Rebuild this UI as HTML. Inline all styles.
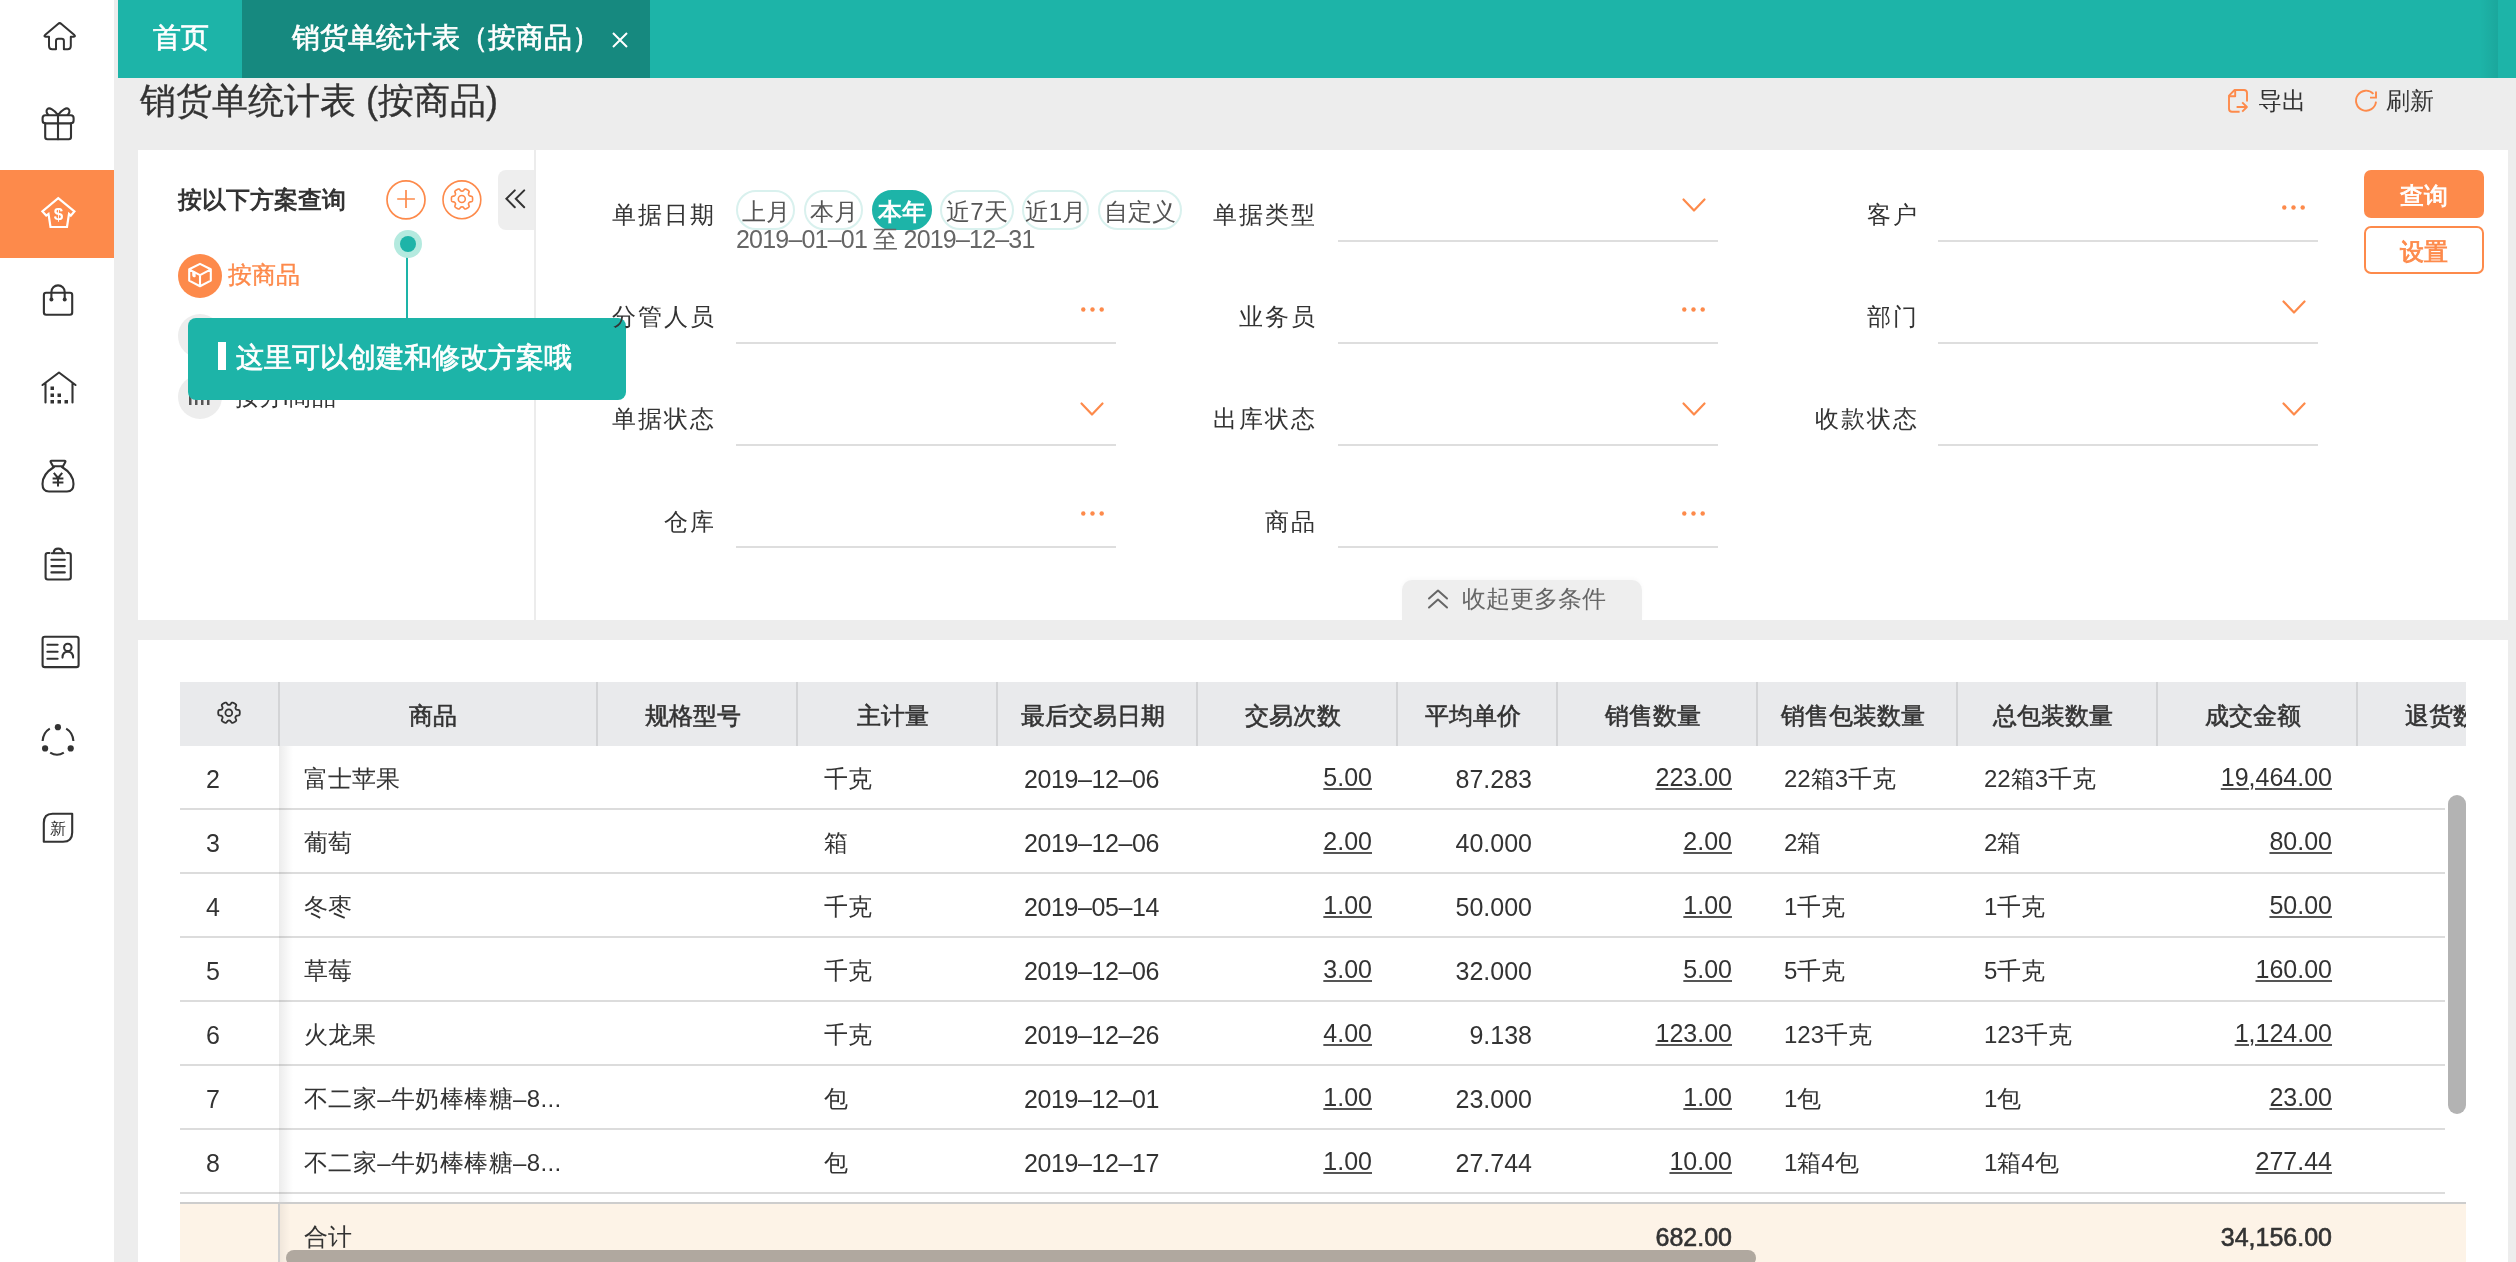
<!DOCTYPE html>
<html><head><meta charset="utf-8">
<style>
*{box-sizing:border-box;margin:0;padding:0}
html,body{width:2516px;height:1262px;overflow:hidden}
body{position:relative;will-change:transform;background:#ededed;font-family:"Liberation Sans",sans-serif;color:#333}
.a{position:absolute}
.t{position:absolute;white-space:nowrap;line-height:1}
svg{position:absolute;overflow:visible}
#side{left:0;top:0;width:114px;height:1262px;background:#fff}
#topbar{left:118px;top:0;width:2398px;height:78px;background:#1db4a8}
.card{background:#fff}
.lbl{font-size:24px;letter-spacing:2px;text-align:right;color:#333}
.uline{height:2px;background:#dedede}
.pill{position:absolute;top:190px;height:40px;border:2px solid #d9f1ee;border-radius:20px;font-size:24px;line-height:40px;text-align:center;color:#555}
.hd{position:absolute;top:684px;height:64px;font-size:24px;-webkit-text-stroke:0.55px #333;line-height:64px;white-space:nowrap;text-align:center;color:#333}
.vd{position:absolute;top:682px;width:2px;height:64px;background:#d3d4d6}
.cell{position:absolute;font-size:24px;line-height:66px;white-space:nowrap;color:#333}
.n25{font-size:25px}
.num{font-size:25px;margin-top:-2px;text-decoration:underline;text-underline-offset:2px;text-decoration-thickness:1.5px;text-decoration-color:#555}
.rl{position:absolute;left:180px;width:2265px;height:2px;background:#dcdcdc}
</style></head><body>

<!-- sidebar -->
<div id="side" class="a">
  <div class="a" style="left:0;top:170px;width:114px;height:88px;background:#fd8a4b"></div>

<svg style="left:0;top:0" width="114" height="870" viewBox="0 0 114 870" fill="none" stroke="#333" stroke-width="2.1" stroke-linejoin="round" stroke-linecap="round">
  <!-- home -->
  <path d="M49 36.7 H45.6 Q43.6 36.5 45 35.1 L58 23.9 Q59.7 22.4 61.4 23.9 L74.4 35.1 Q75.8 36.5 73.8 36.7 H70.8 V46 Q70.8 49.2 67.6 49.2 H63.9 V40.9 Q63.9 38.7 61.7 38.7 H58.2 Q56 38.7 56 40.9 V49.2 H52.2 Q49 49.2 49 46 Z" stroke-width="2"/>
  <!-- gift -->
  <rect x="42.6" y="115.2" width="31" height="8.2" rx="2.8"/>
  <path d="M45.2 123.4 V137 Q45.2 139.2 47.4 139.2 H68.8 Q71 139.2 71 137 V123.4"/>
  <path d="M58 115.2 V139.2"/>
  <path d="M58 115 C54 109.5 49.5 107.3 47.5 109 C45.8 110.5 46.5 113.5 48.5 115 M58 115 C62 109.5 66.5 107.3 68.5 109 C70.2 110.5 69.5 113.5 67.5 115"/>
  <!-- $ house (white) -->
  <path stroke="#fff" stroke-width="2.2" stroke-linejoin="miter" d="M58.2 198.2 L74.4 211.4 L70.8 215.6 L69 213.9 L67 227 L50.5 227 L48.5 213.9 L46.2 215.6 L42.4 211.4 Z"/>
  <text x="58.6" y="219.6" fill="#fff" stroke="none" font-family="Liberation Sans" font-weight="bold" font-size="17" text-anchor="middle">$</text>
  <!-- bag -->
  <rect x="43.9" y="292.8" width="28.3" height="22" rx="2.2"/>
  <path d="M51.4 299.4 V292 A6.65 6.65 0 0 1 64.7 292 V299.4"/>
  <circle cx="51.4" cy="299.4" r="2" fill="#333" stroke="none"/><circle cx="64.7" cy="299.4" r="2" fill="#333" stroke="none"/>
  <!-- warehouse -->
  <path d="M42.5 385 L59 372.5 L75.5 385 M45.5 383 V402.5 M72.5 383 V402.5"/>
  <g fill="#333" stroke="none">
    <rect x="50.5" y="386.5" width="3.5" height="3.5"/>
    <rect x="50.5" y="393.5" width="3.5" height="3.5"/><rect x="57.5" y="393.5" width="3.5" height="3.5"/>
    <rect x="50.5" y="400" width="3.5" height="3.5"/><rect x="57.5" y="400" width="3.5" height="3.5"/><rect x="64.5" y="400" width="3.5" height="3.5"/>
  </g>
  <!-- money bag -->
  <path d="M51.5 460.8 H64.5 Q66 460.8 65.2 462.2 L63 466.3 H53 L50.8 462.2 Q50 460.8 51.5 460.8 Z"/>
  <path d="M54 467 Q42.5 474 42.5 484 Q42.5 491.5 49 491.5 H67 Q73.5 491.5 73.5 484 Q73.5 474 62 467"/>
  <path d="M53.8 472.8 L58 478 L62.2 472.8 M58 478 V486.5 M52.6 478.6 H63.4 M52.6 482.4 H63.4" stroke-width="2" stroke-linecap="butt"/>
  <!-- clipboard -->
  <path d="M49.5 553 H47.8 Q45.6 553 45.6 555.2 V577.3 Q45.6 579.5 47.8 579.5 H68.6 Q70.8 579.5 70.8 577.3 V555.2 Q70.8 553 68.6 553 H67"/>
  <path d="M51.8 553.2 H64.6 M53.6 553 Q54 548.6 58.2 548.6 Q62.4 548.6 62.8 553"/>
  <path d="M51.4 559.8 H64.8 M51.4 566.1 H64.8 M51.4 572.4 H64.8"/>
  <!-- id card -->
  <rect x="42.6" y="636.7" width="36" height="30.4" rx="2.2"/>
  <path d="M47.4 644.8 H57.6 M47.4 651.8 H57.6 M47.4 658.8 H57.6"/>
  <circle cx="67.8" cy="647.4" r="3.7"/>
  <path d="M62.5 657.6 Q62.5 651.8 67.8 651.8 Q73.1 651.8 73.1 657.6"/>
  <!-- share -->
  <circle cx="57.9" cy="727.2" r="3.1" fill="#333" stroke="none"/>
  <circle cx="45.1" cy="748.4" r="3.1" fill="#333" stroke="none"/>
  <circle cx="70.7" cy="748.4" r="3.1" fill="#333" stroke="none"/>
  <path d="M49.8 728.6 Q43.2 732.5 42.6 741 M66.2 728.6 Q72.8 732.5 73.4 741 M50.2 752.6 Q57 756.8 63.8 752.6" stroke-width="2.1" stroke-linecap="butt"/>
  <!-- xin -->
  <path d="M52.5 813.8 H72.2 V832.5 Q72.2 841.8 63 841.8 H43.8 V823 Q43.8 813.8 52.5 813.8 Z" stroke-width="2.1"/>
  <text x="58" y="834" fill="#333" stroke="none" font-size="16" text-anchor="middle">新</text>
</svg>

</div>

<!-- top bar -->
<div id="topbar" class="a">
  <div class="a" style="left:124px;top:0;width:408px;height:78px;background:#16897f"></div>
  <div class="a" style="left:2362px;top:0;width:18px;height:78px;background:linear-gradient(to right,rgba(0,0,0,0),rgba(0,0,0,0.07))"></div>
  <div class="t" style="left:35px;top:24px;font-size:28px;color:#fff;-webkit-text-stroke:0.7px #fff">首页</div>
  <div class="t" style="left:174px;top:24px;font-size:28px;color:#fff;-webkit-text-stroke:0.7px #fff">销货单统计表（按商品）</div>
</div>

<!-- title -->
<div class="t" style="left:140px;top:83px;font-size:36px;color:#333;-webkit-text-stroke:0.3px #333">销货单统计表 (按商品)</div>

<!-- filter card -->
<div class="a card" style="left:138px;top:150px;width:2370px;height:470px"></div>
<div class="a" style="left:534px;top:150px;width:2px;height:470px;background:#ececec"></div>

<svg style="left:612px;top:32px" width="16" height="16" viewBox="0 0 16 16" stroke="#fff" stroke-width="2"><path d="M1 1 L15 15 M15 1 L1 15"/></svg>
<svg style="left:2227px;top:89px" width="23" height="24" viewBox="0 0 23 24" fill="none" stroke="#fd8a4b" stroke-width="1.9" stroke-linejoin="round" stroke-linecap="butt">
<path d="M20 12.6 V4 Q20 1 17 1 H7.6 L2 6.6 V19.7 Q2 22.7 5 22.7 H12.6"/><path d="M8.2 1 V7.2 H2"/>
<path d="M9.6 18 H20 M15.2 13.3 L19.9 18 L15.2 22.7"/></svg>
<div class="t" style="left:2258px;top:89px;font-size:24px;color:#333">导出</div>
<svg style="left:2355px;top:89px" width="23" height="24" viewBox="0 0 23 24" fill="none" stroke="#fd8a4b" stroke-width="1.9" stroke-linecap="butt">
<path d="M21 12.6 A10 10 0 1 1 18.4 4.9"/><path d="M21 2.5 V8.6 H15" stroke-linejoin="miter"/></svg>
<div class="t" style="left:2386px;top:89px;font-size:24px;color:#333">刷新</div>

<div class="t" style="left:178px;top:188px;font-size:24px;font-weight:bold;color:#333">按以下方案查询</div>
<svg style="left:386px;top:179px" width="41" height="41" viewBox="0 0 41 41" fill="none" stroke="#fd8a4b" stroke-width="1.7"><circle cx="20" cy="20.85" r="19"/><path d="M11.2 20 H28.9 M20 11.1 V28.9"/></svg>
<svg style="left:441px;top:179px" width="41" height="41" viewBox="0 0 41 41" fill="none" stroke="#fd8a4b" stroke-width="1.6"><circle cx="20.9" cy="20.8" r="18.9"/>
<path d="M31.60 20.00 L31.60 20.28 L31.58 20.55 L31.56 20.83 L31.54 21.11 L31.50 21.38 L31.44 21.65 L31.36 21.92 L31.25 22.18 L31.06 22.42 L30.75 22.61 L30.29 22.75 L29.73 22.84 L29.20 22.90 L28.80 22.99 L28.52 23.12 L28.33 23.26 L28.18 23.43 L28.06 23.60 L27.95 23.77 L27.84 23.95 L27.74 24.13 L27.64 24.31 L27.56 24.51 L27.49 24.71 L27.46 24.96 L27.49 25.26 L27.62 25.65 L27.82 26.14 L28.03 26.67 L28.14 27.14 L28.12 27.50 L28.01 27.79 L27.85 28.02 L27.65 28.22 L27.44 28.40 L27.23 28.57 L27.00 28.73 L26.77 28.89 L26.54 29.04 L26.30 29.18 L26.06 29.32 L25.81 29.44 L25.56 29.56 L25.31 29.68 L25.05 29.78 L24.79 29.87 L24.52 29.94 L24.24 29.96 L23.94 29.92 L23.61 29.75 L23.26 29.42 L22.91 28.98 L22.59 28.55 L22.31 28.25 L22.06 28.07 L21.84 27.98 L21.62 27.93 L21.41 27.91 L21.21 27.90 L21.00 27.90 L20.79 27.90 L20.59 27.91 L20.38 27.93 L20.16 27.98 L19.94 28.07 L19.69 28.25 L19.41 28.55 L19.09 28.98 L18.74 29.42 L18.39 29.75 L18.06 29.92 L17.76 29.96 L17.48 29.94 L17.21 29.87 L16.95 29.78 L16.69 29.68 L16.44 29.56 L16.19 29.44 L15.94 29.32 L15.70 29.18 L15.46 29.04 L15.23 28.89 L15.00 28.73 L14.77 28.57 L14.56 28.40 L14.35 28.22 L14.15 28.02 L13.99 27.79 L13.88 27.50 L13.86 27.14 L13.97 26.67 L14.18 26.14 L14.38 25.65 L14.51 25.26 L14.54 24.96 L14.51 24.71 L14.44 24.51 L14.36 24.31 L14.26 24.13 L14.16 23.95 L14.05 23.77 L13.94 23.60 L13.82 23.43 L13.67 23.26 L13.48 23.12 L13.20 22.99 L12.80 22.90 L12.27 22.84 L11.71 22.75 L11.25 22.61 L10.94 22.42 L10.75 22.18 L10.64 21.92 L10.56 21.65 L10.50 21.38 L10.46 21.11 L10.44 20.83 L10.42 20.55 L10.40 20.28 L10.40 20.00 L10.40 19.72 L10.42 19.45 L10.44 19.17 L10.46 18.89 L10.50 18.62 L10.56 18.35 L10.64 18.08 L10.75 17.82 L10.94 17.58 L11.25 17.39 L11.71 17.25 L12.27 17.16 L12.80 17.10 L13.20 17.01 L13.48 16.88 L13.67 16.74 L13.82 16.57 L13.94 16.40 L14.05 16.23 L14.16 16.05 L14.26 15.87 L14.36 15.69 L14.44 15.49 L14.51 15.29 L14.54 15.04 L14.51 14.74 L14.38 14.35 L14.18 13.86 L13.97 13.33 L13.86 12.86 L13.88 12.50 L13.99 12.21 L14.15 11.98 L14.35 11.78 L14.56 11.60 L14.77 11.43 L15.00 11.27 L15.23 11.11 L15.46 10.96 L15.70 10.82 L15.94 10.68 L16.19 10.56 L16.44 10.44 L16.69 10.32 L16.95 10.22 L17.21 10.13 L17.48 10.06 L17.76 10.04 L18.06 10.08 L18.39 10.25 L18.74 10.58 L19.09 11.02 L19.41 11.45 L19.69 11.75 L19.94 11.93 L20.16 12.02 L20.38 12.07 L20.59 12.09 L20.79 12.10 L21.00 12.10 L21.21 12.10 L21.41 12.09 L21.62 12.07 L21.84 12.02 L22.06 11.93 L22.31 11.75 L22.59 11.45 L22.91 11.02 L23.26 10.58 L23.61 10.25 L23.94 10.08 L24.24 10.04 L24.52 10.06 L24.79 10.13 L25.05 10.22 L25.31 10.32 L25.56 10.44 L25.81 10.56 L26.06 10.68 L26.30 10.82 L26.54 10.96 L26.77 11.11 L27.00 11.27 L27.23 11.43 L27.44 11.60 L27.65 11.78 L27.85 11.98 L28.01 12.21 L28.12 12.50 L28.14 12.86 L28.03 13.33 L27.82 13.86 L27.62 14.35 L27.49 14.74 L27.46 15.04 L27.49 15.29 L27.56 15.49 L27.64 15.69 L27.74 15.87 L27.84 16.05 L27.95 16.23 L28.06 16.40 L28.18 16.57 L28.33 16.74 L28.52 16.88 L28.80 17.01 L29.20 17.10 L29.73 17.16 L30.29 17.25 L30.75 17.39 L31.06 17.58 L31.25 17.82 L31.36 18.08 L31.44 18.35 L31.50 18.62 L31.54 18.89 L31.56 19.17 L31.58 19.45 L31.60 19.72 Z"/><circle cx="20.8" cy="20.0" r="3.5"/></svg>
<div class="a" style="left:498px;top:170px;width:36px;height:60px;background:#eeeeee;border-radius:8px 0 0 8px"></div>
<svg style="left:505px;top:189px" width="22" height="22" viewBox="0 0 22 22" fill="none" stroke="#333" stroke-width="2" stroke-linejoin="miter" stroke-linecap="round"><path d="M9.8 1.4 L1.4 9.8 L9.8 18.2 M19.2 1.4 L10.8 9.8 L19.2 18.2"/></svg>

<div class="a" style="left:178px;top:314px;width:44px;height:44px;border-radius:50%;background:#ededed"></div>
<div class="a" style="left:178px;top:375px;width:44px;height:44px;border-radius:50%;background:#ededed"></div>
<div class="t" style="left:235px;top:385px;font-size:24px;color:#333">按分l商品</div>
<svg style="left:188px;top:395px" width="24" height="10" viewBox="0 0 24 10" fill="#555"><rect x="1" y="0" width="2.5" height="10"/><rect x="7" y="0" width="2.5" height="10"/><rect x="13" y="0" width="2.5" height="10"/><rect x="19" y="0" width="2.5" height="10"/></svg>

<svg style="left:178px;top:254px" width="44" height="44" viewBox="0 0 44 44"><circle cx="22" cy="22" r="22" fill="#fd8a4b"/>
<g fill="none" stroke="#fff" stroke-width="2.1" stroke-linejoin="round" stroke-linecap="round"><path d="M22 9.9 L32.8 15.3 V26.6 L22 32.2 L11.2 26.6 V15.3 Z M11.6 15.6 L22 21.1 L32.4 15.6 M22 21.1 V32"/><path d="M15.3 18 V21.2 Q15.6 22.4 16.6 22.2 V18.8"/></g></svg>
<div class="t" style="left:228px;top:263px;font-size:24px;color:#fd8a4b;-webkit-text-stroke:0.4px #fd8a4b">按商品</div>

<div class="a" style="left:406px;top:256px;width:2px;height:64px;background:#1db4a8"></div>
<div class="a" style="left:393.5px;top:229.8px;width:28px;height:28px;border-radius:50%;background:#b4eadf"></div>
<div class="a" style="left:399.5px;top:235.8px;width:16px;height:16px;border-radius:50%;background:#1db4a8"></div>
<div class="a" style="left:188px;top:318px;width:438px;height:82px;border-radius:8px;background:#1db4a8"></div>
<div class="a" style="left:218px;top:342px;width:8px;height:28px;background:#fff"></div>
<div class="t" style="left:236px;top:344px;font-size:28px;color:#fff;-webkit-text-stroke:0.7px #fff">这里可以创建和修改方案哦</div>

<div class="t lbl" style="right:1800px;top:203px">单据日期</div>
<div class="pill" style="left:736px;width:59px">上月</div>
<div class="pill" style="left:804px;width:59px">本月</div>
<div class="pill" style="left:940px;width:74px">近7天</div>
<div class="pill" style="left:1022px;width:67px">近1月</div>
<div class="pill" style="left:1098px;width:84px">自定义</div>
<div class="pill" style="left:872px;width:60px;background:#1db4a8;border-color:#1db4a8;color:#fff;font-weight:bold">本年</div>
<div class="t" style="left:736px;top:227px;font-size:25px;color:#666;letter-spacing:-0.8px">2019–01–01 至 2019–12–31</div>
<div class="t lbl" style="right:1199px;top:203px">单据类型</div>
<div class="a uline" style="left:1338px;top:240px;width:380px"></div>
<svg style="left:1682px;top:198px" width="24" height="14" viewBox="0 0 24 14" fill="none" stroke="#fd8a4b" stroke-width="2.2" stroke-linecap="round" stroke-linejoin="round"><path d="M1.5 1.5 L12 12.5 L22.5 1.5"/></svg>
<div class="t lbl" style="right:597px;top:203px">客户</div>
<div class="a uline" style="left:1938px;top:240px;width:380px"></div>
<svg style="left:2282px;top:205px" width="23" height="5" viewBox="0 0 23 5" fill="#fd8a4b"><circle cx="2.3" cy="2.5" r="2.2"/><circle cx="11.5" cy="2.5" r="2.2"/><circle cx="20.7" cy="2.5" r="2.2"/></svg>
<div class="t lbl" style="right:1800px;top:305px">分管人员</div>
<div class="a uline" style="left:736px;top:342px;width:380px"></div>
<svg style="left:1081px;top:307px" width="23" height="5" viewBox="0 0 23 5" fill="#fd8a4b"><circle cx="2.3" cy="2.5" r="2.2"/><circle cx="11.5" cy="2.5" r="2.2"/><circle cx="20.7" cy="2.5" r="2.2"/></svg>
<div class="t lbl" style="right:1199px;top:305px">业务员</div>
<div class="a uline" style="left:1338px;top:342px;width:380px"></div>
<svg style="left:1682px;top:307px" width="23" height="5" viewBox="0 0 23 5" fill="#fd8a4b"><circle cx="2.3" cy="2.5" r="2.2"/><circle cx="11.5" cy="2.5" r="2.2"/><circle cx="20.7" cy="2.5" r="2.2"/></svg>
<div class="t lbl" style="right:597px;top:305px">部门</div>
<div class="a uline" style="left:1938px;top:342px;width:380px"></div>
<svg style="left:2282px;top:300px" width="24" height="14" viewBox="0 0 24 14" fill="none" stroke="#fd8a4b" stroke-width="2.2" stroke-linecap="round" stroke-linejoin="round"><path d="M1.5 1.5 L12 12.5 L22.5 1.5"/></svg>
<div class="t lbl" style="right:1800px;top:407px">单据状态</div>
<div class="a uline" style="left:736px;top:444px;width:380px"></div>
<svg style="left:1080px;top:402px" width="24" height="14" viewBox="0 0 24 14" fill="none" stroke="#fd8a4b" stroke-width="2.2" stroke-linecap="round" stroke-linejoin="round"><path d="M1.5 1.5 L12 12.5 L22.5 1.5"/></svg>
<div class="t lbl" style="right:1199px;top:407px">出库状态</div>
<div class="a uline" style="left:1338px;top:444px;width:380px"></div>
<svg style="left:1682px;top:402px" width="24" height="14" viewBox="0 0 24 14" fill="none" stroke="#fd8a4b" stroke-width="2.2" stroke-linecap="round" stroke-linejoin="round"><path d="M1.5 1.5 L12 12.5 L22.5 1.5"/></svg>
<div class="t lbl" style="right:597px;top:407px">收款状态</div>
<div class="a uline" style="left:1938px;top:444px;width:380px"></div>
<svg style="left:2282px;top:402px" width="24" height="14" viewBox="0 0 24 14" fill="none" stroke="#fd8a4b" stroke-width="2.2" stroke-linecap="round" stroke-linejoin="round"><path d="M1.5 1.5 L12 12.5 L22.5 1.5"/></svg>
<div class="t lbl" style="right:1800px;top:510px">仓库</div>
<div class="a uline" style="left:736px;top:546px;width:380px"></div>
<svg style="left:1081px;top:511px" width="23" height="5" viewBox="0 0 23 5" fill="#fd8a4b"><circle cx="2.3" cy="2.5" r="2.2"/><circle cx="11.5" cy="2.5" r="2.2"/><circle cx="20.7" cy="2.5" r="2.2"/></svg>
<div class="t lbl" style="right:1199px;top:510px">商品</div>
<div class="a uline" style="left:1338px;top:546px;width:380px"></div>
<svg style="left:1682px;top:511px" width="23" height="5" viewBox="0 0 23 5" fill="#fd8a4b"><circle cx="2.3" cy="2.5" r="2.2"/><circle cx="11.5" cy="2.5" r="2.2"/><circle cx="20.7" cy="2.5" r="2.2"/></svg>
<div class="a" style="left:2364px;top:170px;width:120px;height:48px;border-radius:7px;background:#fd8a4b"></div>
<div class="t" style="left:2400px;top:184px;font-size:24px;color:#fff;-webkit-text-stroke:0.8px #fff">查询</div>
<div class="a" style="left:2364px;top:226px;width:120px;height:48px;border-radius:7px;border:2px solid #fd8a4b;background:#fff"></div>
<div class="t" style="left:2400px;top:240px;font-size:24px;color:#fd8a4b;-webkit-text-stroke:0.8px #fd8a4b">设置</div>
<div class="a" style="left:1402px;top:580px;width:240px;height:40px;border-radius:10px 10px 0 0;background:#eeeeee;box-shadow:0 -2px 4px rgba(0,0,0,0.025)"></div>
<svg style="left:1427px;top:589px" width="22" height="20" viewBox="0 0 22 20" fill="none" stroke="#666" stroke-width="2" stroke-linecap="round" stroke-linejoin="round"><path d="M2 9.5 L11 1.5 L20 9.5 M2 18.5 L11 10.5 L20 18.5"/></svg>
<div class="t" style="left:1462px;top:587px;font-size:24px;color:#666">收起更多条件</div>
<!-- table card -->
<div class="a card" style="left:138px;top:640px;width:2370px;height:622px"></div>
<div class="a" style="left:180px;top:682px;width:2286px;height:64px;background:#e9eaec"></div>
<svg style="left:205px;top:689px" width="48" height="48" viewBox="0 0 48 48" fill="none" stroke="#333" stroke-width="1.8"><path d="M34.80 23.70 L34.80 23.98 L34.78 24.27 L34.76 24.55 L34.73 24.83 L34.69 25.11 L34.64 25.38 L34.56 25.66 L34.43 25.92 L34.23 26.16 L33.89 26.35 L33.39 26.48 L32.77 26.55 L32.19 26.60 L31.75 26.68 L31.45 26.79 L31.25 26.93 L31.10 27.08 L30.97 27.25 L30.86 27.42 L30.75 27.60 L30.66 27.78 L30.56 27.96 L30.48 28.15 L30.42 28.36 L30.40 28.61 L30.45 28.93 L30.61 29.34 L30.85 29.87 L31.10 30.44 L31.24 30.94 L31.24 31.33 L31.14 31.62 L30.97 31.86 L30.78 32.07 L30.57 32.26 L30.34 32.43 L30.12 32.60 L29.88 32.76 L29.64 32.91 L29.40 33.05 L29.15 33.19 L28.90 33.32 L28.65 33.44 L28.39 33.56 L28.13 33.66 L27.86 33.75 L27.58 33.82 L27.30 33.84 L26.99 33.78 L26.65 33.59 L26.29 33.22 L25.92 32.72 L25.58 32.24 L25.30 31.90 L25.05 31.70 L24.83 31.59 L24.62 31.54 L24.41 31.51 L24.20 31.50 L24.00 31.50 L23.80 31.50 L23.59 31.51 L23.38 31.54 L23.17 31.59 L22.95 31.70 L22.70 31.90 L22.42 32.24 L22.08 32.72 L21.71 33.22 L21.35 33.59 L21.01 33.78 L20.70 33.84 L20.42 33.82 L20.14 33.75 L19.87 33.66 L19.61 33.56 L19.35 33.44 L19.10 33.32 L18.85 33.19 L18.60 33.05 L18.36 32.91 L18.12 32.76 L17.88 32.60 L17.66 32.43 L17.43 32.26 L17.22 32.07 L17.03 31.86 L16.86 31.62 L16.76 31.33 L16.76 30.94 L16.90 30.44 L17.15 29.87 L17.39 29.34 L17.55 28.93 L17.60 28.61 L17.58 28.36 L17.52 28.15 L17.44 27.96 L17.34 27.78 L17.25 27.60 L17.14 27.42 L17.03 27.25 L16.90 27.08 L16.75 26.93 L16.55 26.79 L16.25 26.68 L15.81 26.60 L15.23 26.55 L14.61 26.48 L14.11 26.35 L13.77 26.16 L13.57 25.92 L13.44 25.66 L13.36 25.38 L13.31 25.11 L13.27 24.83 L13.24 24.55 L13.22 24.27 L13.20 23.98 L13.20 23.70 L13.20 23.42 L13.22 23.13 L13.24 22.85 L13.27 22.57 L13.31 22.29 L13.36 22.02 L13.44 21.74 L13.57 21.48 L13.77 21.24 L14.11 21.05 L14.61 20.92 L15.23 20.85 L15.81 20.80 L16.25 20.72 L16.55 20.61 L16.75 20.47 L16.90 20.32 L17.03 20.15 L17.14 19.98 L17.25 19.80 L17.34 19.62 L17.44 19.44 L17.52 19.25 L17.58 19.04 L17.60 18.79 L17.55 18.47 L17.39 18.06 L17.15 17.53 L16.90 16.96 L16.76 16.46 L16.76 16.07 L16.86 15.78 L17.03 15.54 L17.22 15.33 L17.43 15.14 L17.66 14.97 L17.88 14.80 L18.12 14.64 L18.36 14.49 L18.60 14.35 L18.85 14.21 L19.10 14.08 L19.35 13.96 L19.61 13.84 L19.87 13.74 L20.14 13.65 L20.42 13.58 L20.70 13.56 L21.01 13.62 L21.35 13.81 L21.71 14.18 L22.08 14.68 L22.42 15.16 L22.70 15.50 L22.95 15.70 L23.17 15.81 L23.38 15.86 L23.59 15.89 L23.80 15.90 L24.00 15.90 L24.20 15.90 L24.41 15.89 L24.62 15.86 L24.83 15.81 L25.05 15.70 L25.30 15.50 L25.58 15.16 L25.92 14.68 L26.29 14.18 L26.65 13.81 L26.99 13.62 L27.30 13.56 L27.58 13.58 L27.86 13.65 L28.13 13.74 L28.39 13.84 L28.65 13.96 L28.90 14.08 L29.15 14.21 L29.40 14.35 L29.64 14.49 L29.88 14.64 L30.12 14.80 L30.34 14.97 L30.57 15.14 L30.78 15.33 L30.97 15.54 L31.14 15.78 L31.24 16.07 L31.24 16.46 L31.10 16.96 L30.85 17.53 L30.61 18.06 L30.45 18.47 L30.40 18.79 L30.42 19.04 L30.48 19.25 L30.56 19.44 L30.66 19.62 L30.75 19.80 L30.86 19.98 L30.97 20.15 L31.10 20.32 L31.25 20.47 L31.45 20.61 L31.75 20.72 L32.19 20.80 L32.77 20.85 L33.39 20.92 L33.89 21.05 L34.23 21.24 L34.43 21.48 L34.56 21.74 L34.64 22.02 L34.69 22.29 L34.73 22.57 L34.76 22.85 L34.78 23.13 L34.80 23.42 Z"/><circle cx="23.8" cy="23.7" r="3.4"/></svg>
<div class="vd" style="left:596px"></div>
<div class="vd" style="left:796px"></div>
<div class="vd" style="left:996px"></div>
<div class="vd" style="left:1196px"></div>
<div class="vd" style="left:1396px"></div>
<div class="vd" style="left:1556px"></div>
<div class="vd" style="left:1756px"></div>
<div class="vd" style="left:1956px"></div>
<div class="vd" style="left:2156px"></div>
<div class="vd" style="left:2356px"></div>
<div class="hd" style="left:283px;width:300px">商品</div>
<div class="hd" style="left:543px;width:300px">规格型号</div>
<div class="hd" style="left:743px;width:300px">主计量</div>
<div class="hd" style="left:943px;width:300px">最后交易日期</div>
<div class="hd" style="left:1143px;width:300px">交易次数</div>
<div class="hd" style="left:1323px;width:300px">平均单价</div>
<div class="hd" style="left:1503px;width:300px">销售数量</div>
<div class="hd" style="left:1703px;width:300px">销售包装数量</div>
<div class="hd" style="left:1903px;width:300px">总包装数量</div>
<div class="hd" style="left:2103px;width:300px">成交金额</div>
<div class="hd" style="left:2405px;width:61px;overflow:hidden;text-align:left">退货数量</div>
<div class="rl" style="top:808px"></div>
<div class="cell n25" style="left:206px;top:746px">2</div>
<div class="cell" style="left:304px;top:746px">富士苹果</div>
<div class="cell" style="left:824px;top:746px">千克</div>
<div class="cell n25" style="left:1024px;top:746px;letter-spacing:-0.4px">2019–12–06</div>
<div class="cell num" style="right:1144px;top:746px">5.00</div>
<div class="cell n25" style="right:984px;top:746px">87.283</div>
<div class="cell num" style="right:784px;top:746px">223.00</div>
<div class="cell" style="left:1784px;top:746px">22箱3千克</div>
<div class="cell" style="left:1984px;top:746px">22箱3千克</div>
<div class="cell num" style="right:184px;top:746px">19,464.00</div>
<div class="rl" style="top:872px"></div>
<div class="cell n25" style="left:206px;top:810px">3</div>
<div class="cell" style="left:304px;top:810px">葡萄</div>
<div class="cell" style="left:824px;top:810px">箱</div>
<div class="cell n25" style="left:1024px;top:810px;letter-spacing:-0.4px">2019–12–06</div>
<div class="cell num" style="right:1144px;top:810px">2.00</div>
<div class="cell n25" style="right:984px;top:810px">40.000</div>
<div class="cell num" style="right:784px;top:810px">2.00</div>
<div class="cell" style="left:1784px;top:810px">2箱</div>
<div class="cell" style="left:1984px;top:810px">2箱</div>
<div class="cell num" style="right:184px;top:810px">80.00</div>
<div class="rl" style="top:936px"></div>
<div class="cell n25" style="left:206px;top:874px">4</div>
<div class="cell" style="left:304px;top:874px">冬枣</div>
<div class="cell" style="left:824px;top:874px">千克</div>
<div class="cell n25" style="left:1024px;top:874px;letter-spacing:-0.4px">2019–05–14</div>
<div class="cell num" style="right:1144px;top:874px">1.00</div>
<div class="cell n25" style="right:984px;top:874px">50.000</div>
<div class="cell num" style="right:784px;top:874px">1.00</div>
<div class="cell" style="left:1784px;top:874px">1千克</div>
<div class="cell" style="left:1984px;top:874px">1千克</div>
<div class="cell num" style="right:184px;top:874px">50.00</div>
<div class="rl" style="top:1000px"></div>
<div class="cell n25" style="left:206px;top:938px">5</div>
<div class="cell" style="left:304px;top:938px">草莓</div>
<div class="cell" style="left:824px;top:938px">千克</div>
<div class="cell n25" style="left:1024px;top:938px;letter-spacing:-0.4px">2019–12–06</div>
<div class="cell num" style="right:1144px;top:938px">3.00</div>
<div class="cell n25" style="right:984px;top:938px">32.000</div>
<div class="cell num" style="right:784px;top:938px">5.00</div>
<div class="cell" style="left:1784px;top:938px">5千克</div>
<div class="cell" style="left:1984px;top:938px">5千克</div>
<div class="cell num" style="right:184px;top:938px">160.00</div>
<div class="rl" style="top:1064px"></div>
<div class="cell n25" style="left:206px;top:1002px">6</div>
<div class="cell" style="left:304px;top:1002px">火龙果</div>
<div class="cell" style="left:824px;top:1002px">千克</div>
<div class="cell n25" style="left:1024px;top:1002px;letter-spacing:-0.4px">2019–12–26</div>
<div class="cell num" style="right:1144px;top:1002px">4.00</div>
<div class="cell n25" style="right:984px;top:1002px">9.138</div>
<div class="cell num" style="right:784px;top:1002px">123.00</div>
<div class="cell" style="left:1784px;top:1002px">123千克</div>
<div class="cell" style="left:1984px;top:1002px">123千克</div>
<div class="cell num" style="right:184px;top:1002px">1,124.00</div>
<div class="rl" style="top:1128px"></div>
<div class="cell n25" style="left:206px;top:1066px">7</div>
<div class="cell" style="left:304px;top:1066px;letter-spacing:0.4px">不二家–牛奶棒棒糖–8...</div>
<div class="cell" style="left:824px;top:1066px">包</div>
<div class="cell n25" style="left:1024px;top:1066px;letter-spacing:-0.4px">2019–12–01</div>
<div class="cell num" style="right:1144px;top:1066px">1.00</div>
<div class="cell n25" style="right:984px;top:1066px">23.000</div>
<div class="cell num" style="right:784px;top:1066px">1.00</div>
<div class="cell" style="left:1784px;top:1066px">1包</div>
<div class="cell" style="left:1984px;top:1066px">1包</div>
<div class="cell num" style="right:184px;top:1066px">23.00</div>
<div class="rl" style="top:1192px"></div>
<div class="cell n25" style="left:206px;top:1130px">8</div>
<div class="cell" style="left:304px;top:1130px;letter-spacing:0.4px">不二家–牛奶棒棒糖–8...</div>
<div class="cell" style="left:824px;top:1130px">包</div>
<div class="cell n25" style="left:1024px;top:1130px;letter-spacing:-0.4px">2019–12–17</div>
<div class="cell num" style="right:1144px;top:1130px">1.00</div>
<div class="cell n25" style="right:984px;top:1130px">27.744</div>
<div class="cell num" style="right:784px;top:1130px">10.00</div>
<div class="cell" style="left:1784px;top:1130px">1箱4包</div>
<div class="cell" style="left:1984px;top:1130px">1箱4包</div>
<div class="cell num" style="right:184px;top:1130px">277.44</div>
<div class="a" style="left:279px;top:746px;width:14px;height:456px;background:linear-gradient(to right,rgba(0,0,0,0.075),rgba(0,0,0,0))"></div>
<div class="a" style="left:278px;top:682px;width:2px;height:64px;background:#d3d4d6"></div>
<div class="a" style="left:180px;top:1202px;width:2286px;height:60px;background:#fdf3e7;border-top:2px solid #cdcdcd"></div>
<div class="a" style="left:278px;top:1204px;width:2px;height:58px;background:#d0d0d0"></div><div class="a" style="left:280px;top:1204px;width:10px;height:58px;background:linear-gradient(to right,rgba(0,0,0,0.05),rgba(0,0,0,0))"></div>
<div class="cell" style="left:304px;top:1204px">合计</div>
<div class="cell" style="right:784px;top:1204px;-webkit-text-stroke:0.6px #333;font-size:25px">682.00</div>
<div class="cell" style="right:184px;top:1204px;-webkit-text-stroke:0.6px #333;font-size:25px">34,156.00</div>
<div class="a" style="left:286px;top:1250px;width:1470px;height:16px;border-radius:8px;background:#b0a89f"></div>
<div class="a" style="left:2448px;top:795px;width:18px;height:319px;border-radius:9px;background:#b3b3b3"></div>

</body></html>
